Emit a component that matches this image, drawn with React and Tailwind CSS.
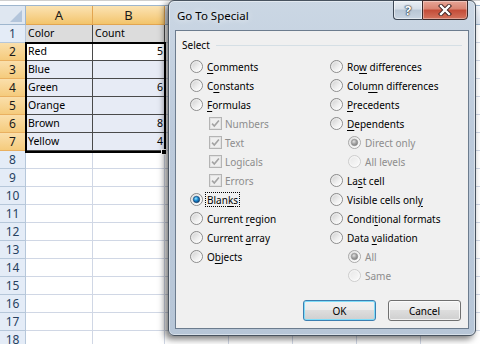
import React from "react";

const rows = [
  { n: 1, a: "Color", b: "Count", kind: "head" },
  { n: 2, a: "Red", b: "5", kind: "sel", active: true },
  { n: 3, a: "Blue", b: "", kind: "sel" },
  { n: 4, a: "Green", b: "6", kind: "sel" },
  { n: 5, a: "Orange", b: "", kind: "sel" },
  { n: 6, a: "Brown", b: "8", kind: "sel" },
  { n: 7, a: "Yellow", b: "4", kind: "sel" },
  ...Array.from({ length: 11 }, (_, i) => ({ n: 8 + i, a: "", b: "", kind: "empty" })),
];

function SheetRow({ r }) {
  const sel = r.kind === "sel";
  const table = r.kind !== "empty";
  const head = sel
    ? "bg-linear-to-b from-[#fadfab] to-[#f5cb7c] border-[#e9b060] text-[#1a1a1a]"
    : "bg-[#e4ecf7] border-[#b6c7da] text-[#27415f]";
  const cellBg = r.active ? "bg-white" : sel ? "bg-[#e7ebf5]" : r.kind === "head" ? "bg-[#dcdcdc]" : "bg-white";
  const cellBorder = table ? "border-[#4a4a4a]" : "border-[#d0d7e5]";
  const bAlign = r.kind === "head" ? "justify-start pl-[2px]" : "justify-end pr-[1px]";
  return (
    <div className="flex h-[18px]">
      <div className={`w-[26px] shrink-0 border-r border-b flex items-center justify-center text-[12px] leading-none font-['Noto_Sans',sans-serif] ${head}`}>
        {r.n}
      </div>
      <div className={`w-[67px] shrink-0 border-r border-b flex items-center pl-[2px] text-[10.5px] text-black ${cellBg} ${cellBorder}`}>
        {r.a}
      </div>
      <div className={`w-[72px] shrink-0 border-r border-b flex items-center text-[10.5px] text-black ${bAlign} ${cellBg} ${cellBorder}`}>
        {r.b}
      </div>
      <div className="w-[64px] shrink-0 border-r border-b border-[#d0d7e5]" />
      <div className="w-[64px] shrink-0 border-r border-b border-[#d0d7e5]" />
      <div className="w-[64px] shrink-0 border-r border-b border-[#d0d7e5]" />
      <div className="w-[64px] shrink-0 border-r border-b border-[#d0d7e5]" />
      <div className="w-[64px] shrink-0 border-r border-b border-[#d0d7e5]" />
    </div>
  );
}

function Radio({ checked, disabled }) {
  return (
    <svg width="13" height="13" viewBox="0 0 13 13" className="shrink-0">
      <defs>
        <linearGradient id="rgN" x1="0" y1="0" x2="1" y2="1">
          <stop offset="0" stopColor="#c9c9c9" />
          <stop offset="0.6" stopColor="#f1f1f1" />
          <stop offset="1" stopColor="#ffffff" />
        </linearGradient>
        <linearGradient id="rgD" x1="0" y1="0" x2="1" y2="1">
          <stop offset="0" stopColor="#e6e6e6" />
          <stop offset="1" stopColor="#fbfbfb" />
        </linearGradient>
        <radialGradient id="rgB" cx="0.4" cy="0.35" r="0.7">
          <stop offset="0" stopColor="#9be6ff" />
          <stop offset="0.45" stopColor="#1f8fd6" />
          <stop offset="1" stopColor="#0a3c70" />
        </radialGradient>
        <radialGradient id="rgG" cx="0.4" cy="0.35" r="0.7">
          <stop offset="0" stopColor="#e2e2e2" />
          <stop offset="0.5" stopColor="#a6a6a6" />
          <stop offset="1" stopColor="#7a7a7a" />
        </radialGradient>
      </defs>
      <circle
        cx="6.5"
        cy="6.5"
        r="6"
        fill={disabled && !checked ? "url(#rgD)" : "url(#rgN)"}
        stroke={disabled ? (checked ? "#a9a9a9" : "#cdcdcd") : "#8b8b8b"}
      />
      <circle cx="6.5" cy="6.5" r="4.8" fill="none" stroke="#ffffff" strokeOpacity="0.5" />
      {checked && (
        <circle
          cx="6.5"
          cy="6.5"
          r="3.2"
          fill={disabled ? "url(#rgG)" : "url(#rgB)"}
          stroke={disabled ? "#8c8c8c" : "#0b3766"}
          strokeWidth="0.6"
        />
      )}
    </svg>
  );
}

function Check() {
  return (
    <svg width="13" height="13" viewBox="0 0 13 13" className="shrink-0">
      <rect x="0.5" y="0.5" width="12" height="12" fill="#f6f6f6" stroke="#b4b4b4" />
      <rect x="1.5" y="1.5" width="10" height="10" fill="#efefef" stroke="#e2e2e2" />
      <path d="M3.1 6.6 L5.3 9 L9.9 3.4" fill="none" stroke="#a3a3a3" strokeWidth="1.6" />
    </svg>
  );
}

function Label({ t, u, disabled }) {
  if (u === undefined) return <span className={disabled ? "text-[#8d8d8d]" : "text-black"}>{t}</span>;
  return (
    <span className={disabled ? "text-[#8d8d8d]" : "text-black"}>
      {t.slice(0, u)}
      <span className="underline underline-offset-[1.5px] decoration-[1px]">{t[u]}</span>
      {t.slice(u + 1)}
    </span>
  );
}

function Item({ it }) {
  if (it.type === "check") {
    return (
      <div className="h-[19px] flex items-center gap-[3px] pl-[19px]">
        <Check />
        <Label t={it.t} disabled />
      </div>
    );
  }
  if (it.sub) {
    return (
      <div className="h-[19px] flex items-center gap-[4px] pl-[18px]">
        <Radio checked={it.checked} disabled />
        <Label t={it.t} disabled />
      </div>
    );
  }
  return (
    <div className="h-[19px] flex items-center gap-[4px]">
      <Radio checked={it.checked} />
      {it.focus ? (
        <span className="border border-dotted border-black px-[1px] -ml-[2px] h-[15px] flex items-center">
          <Label t={it.t} u={it.u} />
        </span>
      ) : (
        <Label t={it.t} u={it.u} />
      )}
    </div>
  );
}

const left = [
  { t: "Comments", u: 0 },
  { t: "Constants", u: 1 },
  { t: "Formulas", u: 0 },
  { t: "Numbers", type: "check" },
  { t: "Text", type: "check" },
  { t: "Logicals", type: "check" },
  { t: "Errors", type: "check" },
  { t: "Blanks", u: 4, checked: true, focus: true },
  { t: "Current region", u: 8 },
  { t: "Current array", u: 8 },
  { t: "Objects", u: 1 },
];

const right = [
  { t: "Row differences", u: 2 },
  { t: "Column differences", u: 4 },
  { t: "Precedents", u: 0 },
  { t: "Dependents", u: 0 },
  { t: "Direct only", sub: true, checked: true },
  { t: "All levels", sub: true },
  { t: "Last cell", u: 2 },
  { t: "Visible cells only", u: 17 },
  { t: "Conditional formats", u: 5 },
  { t: "Data validation", u: 5 },
  { t: "All", sub: true, checked: true },
  { t: "Same", sub: true },
];

export default function App() {
  return (
    <div className="relative w-[480px] h-[344px] overflow-hidden bg-white font-['Noto_Sans',sans-serif]">
      {/* spreadsheet */}
      <div className="h-[6px] border-t border-b border-t-[#cfcfcf] border-b-[#9eb6ce] bg-white" />
      <div className="flex h-[19px]">
        <div className="relative w-[26px] shrink-0 border-r border-b border-[#9eb6ce] bg-[#dfe7f1]">
          <svg width="25" height="18" className="absolute left-0 top-0">
            <polygon points="22,4 22,16 10,16" fill="#b3c5db" />
          </svg>
        </div>
        <div className="w-[67px] shrink-0 border-r border-b border-[#e2a550] bg-linear-to-b from-[#fbe3b3] to-[#f3c46a] flex items-center justify-center pt-[2px] text-[13px] text-[#1a1a1a]">
          A
        </div>
        <div className="w-[72px] shrink-0 border-r border-b border-[#e2a550] bg-linear-to-b from-[#fbe3b3] to-[#f3c46a] flex items-center justify-center pt-[2px] text-[13px] text-[#1a1a1a]">
          B
        </div>
        <div className="w-[64px] shrink-0 border-r border-b border-[#9eb6ce] bg-linear-to-b from-[#f7f9fc] to-[#dce5f0]" />
        <div className="w-[64px] shrink-0 border-r border-b border-[#9eb6ce] bg-linear-to-b from-[#f7f9fc] to-[#dce5f0]" />
        <div className="w-[64px] shrink-0 border-r border-b border-[#9eb6ce] bg-linear-to-b from-[#f7f9fc] to-[#dce5f0]" />
        <div className="w-[64px] shrink-0 border-r border-b border-[#9eb6ce] bg-linear-to-b from-[#f7f9fc] to-[#dce5f0]" />
        <div className="w-[64px] shrink-0 border-r border-b border-[#9eb6ce] bg-linear-to-b from-[#f7f9fc] to-[#dce5f0]" />
      </div>
      {rows.map((r) => (
        <SheetRow key={r.n} r={r} />
      ))}

      {/* selection border and fill handle */}
      <div className="absolute left-[25px] top-[42px] w-[141px] h-[111px] border-2 border-black pointer-events-none" />
      <div className="absolute left-[161px] top-[149px] w-[6px] h-[6px] bg-black border border-white" />

      {/* dialog */}
      <div className="absolute left-[168px] top-0 w-[308px] h-[336px] rounded-[6px] border border-[#48535f] bg-[linear-gradient(#cbd7e4,#bccadb_40%,#b7c6d7)] shadow-[-3px_3px_7px_rgba(0,0,0,0.55),inset_0_0_0_1px_rgba(255,255,255,0.45)] flex flex-col pl-[6px] pr-[6px] pb-[6px]">
        <div className="h-[29px] shrink-0 flex items-center pl-[2px] text-[11.5px] text-black [text-shadow:0_0_6px_#ffffff]">
          Go To Special
        </div>
        <div className="absolute right-[7px] -top-[1px] flex h-[20px]">
          <div className="w-[29px] h-full border border-r-0 border-[#3d4856] rounded-bl-[4px] bg-[linear-gradient(#e9eff5,#d5dee8_45%,#b8c6d5_50%,#c9d5e2)] flex items-center justify-center shadow-[inset_0_0_0_1px_rgba(255,255,255,0.5)]">
            <span className="text-[13px] font-bold text-white leading-none [text-shadow:0_0_1px_#1e2a38,0_0_1px_#1e2a38,0_0_2px_#1e2a38]">?</span>
          </div>
          <div className="w-[46px] h-full border border-[#3d2a2a] rounded-br-[4px] bg-[linear-gradient(#e7a596,#d98371_45%,#c34b37_50%,#d4735d)] flex items-center justify-center shadow-[inset_0_0_0_1px_rgba(255,255,255,0.35)]">
            <svg width="14" height="12" viewBox="0 0 14 12">
              <path d="M3 2 L11 10 M11 2 L3 10" stroke="#3b2020" strokeWidth="4.2" strokeLinecap="square" />
              <path d="M3 2 L11 10 M11 2 L3 10" stroke="#ffffff" strokeWidth="2.4" strokeLinecap="square" />
            </svg>
          </div>
        </div>

        <div className="flex-1 border border-[#6c7c8e] bg-[#f0f0f0] flex flex-col text-[10px] leading-[12px]">
          <div className="h-[14px] mt-[7px] px-[6px] flex items-center gap-[6px]">
            <span className="text-black">Select</span>
            <div className="flex-1 h-px bg-[#d5dfe5]" />
          </div>
          <div className="flex pl-[14px] mt-[5px]">
            <div className="w-[140px] flex flex-col">
              {left.map((it) => (
                <Item key={it.t} it={it} />
              ))}
            </div>
            <div className="flex flex-col">
              {right.map((it) => (
                <Item key={it.t + (it.sub ? "s" : "")} it={it} />
              ))}
            </div>
          </div>
          <div className="mt-auto flex justify-end gap-[12px] pr-[7px] pb-[7px]">
            <button className="w-[73px] h-[21px] rounded-[3px] border border-[#3c7fb1] bg-[linear-gradient(#f2f2f2,#ebebeb_50%,#dddddd_50%,#cfcfcf)] shadow-[inset_0_0_0_1px_#7fdcf8] text-[10px] text-black flex items-center justify-center">
              OK
            </button>
            <button className="w-[73px] h-[21px] rounded-[3px] border border-[#707070] bg-[linear-gradient(#f2f2f2,#ebebeb_50%,#dddddd_50%,#cfcfcf)] shadow-[inset_0_0_0_1px_rgba(255,255,255,0.7)] text-[10px] text-black flex items-center justify-center">
              Cancel
            </button>
          </div>
        </div>
      </div>
    </div>
  );
}
